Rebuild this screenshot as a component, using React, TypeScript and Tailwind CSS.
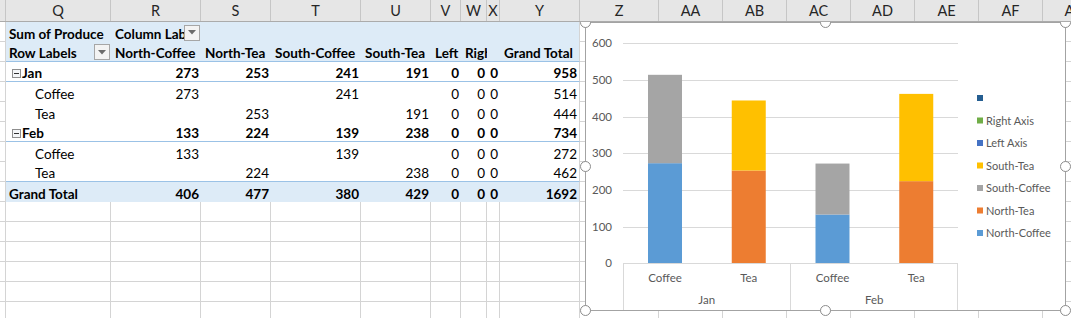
import React from 'react';

const COLS = [
  { w: 'w-[6px]', h: '' },
  { w: 'w-[105px]', h: 'Q' },
  { w: 'w-[90px]', h: 'R' },
  { w: 'w-[70px]', h: 'S' },
  { w: 'w-[90px]', h: 'T' },
  { w: 'w-[70px]', h: 'U' },
  { w: 'w-[30px]', h: 'V' },
  { w: 'w-[26px]', h: 'W' },
  { w: 'w-[13px]', h: 'X' },
  { w: 'w-[80px]', h: 'Y' },
  { w: 'w-[79px]', h: 'Z' },
  { w: 'w-[64px]', h: 'AA' },
  { w: 'w-[64px]', h: 'AB' },
  { w: 'w-[64px]', h: 'AC' },
  { w: 'w-[64px]', h: 'AD' },
  { w: 'w-[64px]', h: 'AE' },
  { w: 'w-[64px]', h: 'AF' },
  { w: 'w-[64px]', h: 'AG' },
];

type PRow = {
  kind: 'h1' | 'h2' | 'data';
  label?: string;
  vals?: string[];
  bold?: boolean;
  group?: boolean;
  indent?: boolean;
  band?: boolean;
  line?: boolean;
};

const PIVOT: PRow[] = [
  { kind: 'h1', band: true },
  { kind: 'h2', band: true, line: true, bold: true },
  { kind: 'data', label: 'Jan', bold: true, group: true, line: true, vals: ['273', '253', '241', '191', '0', '0', '0', '958'] },
  { kind: 'data', label: 'Coffee', indent: true, vals: ['273', '', '241', '', '0', '0', '0', '514'] },
  { kind: 'data', label: 'Tea', indent: true, vals: ['', '253', '', '191', '0', '0', '0', '444'] },
  { kind: 'data', label: 'Feb', bold: true, group: true, line: true, vals: ['133', '224', '139', '238', '0', '0', '0', '734'] },
  { kind: 'data', label: 'Coffee', indent: true, vals: ['133', '', '139', '', '0', '0', '0', '272'] },
  { kind: 'data', label: 'Tea', indent: true, line: true, vals: ['', '224', '', '238', '0', '0', '0', '462'] },
  { kind: 'data', label: 'Grand Total', bold: true, band: true, vals: ['406', '477', '380', '429', '0', '0', '0', '1692'] },
];

const H2 = ['North-Coffee', 'North-Tea', 'South-Coffee', 'South-Tea', 'Left Axis', 'Right Axis', '', 'Grand Total'];

function DropBtn() {
  return (
    <div className="shrink-0 w-[16px] h-[16px] mr-[1px] -mt-[3px] border border-[#a6a6a6] bg-[#f3f3f3] flex items-center justify-center">
      <svg width="8" height="5" viewBox="0 0 8 5">
        <path d="M0 0 L8 0 L4 4.5 Z" fill="#6b6b6b" />
      </svg>
    </div>
  );
}

function Collapse() {
  return (
    <div className="shrink-0 w-[9px] h-[9px] border border-[#8e8e8e] bg-[#f4f6f8] flex items-center justify-center mr-[1px]">
      <div className="w-[5px] h-[1px] bg-[#333]" />
    </div>
  );
}

function PivotRow({ r }: { r: PRow }) {
  const bg = r.band ? 'bg-[#ddebf7]' : 'bg-white';
  const bb = r.line ? 'border-b border-[#9bc2e6]' : '';
  const weight = r.bold ? 'font-bold' : 'font-normal';
  const pcols = COLS.slice(1, 10);
  return (
    <>
      {pcols.map((c, i) => {
        const isLast = i === 8;
        const base = `${c.w} shrink-0 h-[20px] pt-[4px] ${bg} ${bb} ${isLast ? 'border-r border-r-[#d4d4d4]' : ''} overflow-hidden whitespace-nowrap flex items-center`;
        if (r.kind === 'h1') {
          if (i === 0)
            return (
              <div key={i} className={`${base} pl-[3px] font-bold`}>
                Sum of Produce
              </div>
            );
          if (i === 1)
            return (
              <div key={i} className={`${base} pl-[4px] font-bold`}>
                <span className="flex-1 overflow-hidden">Column Labels</span>
                <DropBtn />
              </div>
            );
          return <div key={i} className={base} />;
        }
        if (r.kind === 'h2') {
          if (i === 0)
            return (
              <div key={i} className={`${base} pl-[3px] font-bold`}>
                <span className="flex-1 overflow-hidden">Row Labels</span>
                <DropBtn />
              </div>
            );
          return (
            <div key={i} className={`${base} pl-[4px] font-bold`}>
              {H2[i - 1]}
            </div>
          );
        }
        if (i === 0) {
          return (
            <div
              key={i}
              className={`${base} ${weight} ${r.group ? 'pl-[6px]' : r.indent ? 'pl-[29px]' : 'pl-[3px]'}`}
            >
              {r.group && <Collapse />}
              {r.label}
            </div>
          );
        }
        return (
          <div key={i} className={`${base} ${weight} justify-end pr-[2px]`}>
            {r.vals![i - 1]}
          </div>
        );
      })}
    </>
  );
}

function GridCell({ w }: { w: string }) {
  return <div className={`${w} shrink-0 h-[20px] border-r border-b border-[#d4d4d4] bg-white`} />;
}

const Y0 = 241.3;
const STEP = 36.67;
const PX = STEP / 100;

const BARS: { cx: number; segs: [number, string][] }[] = [
  { cx: 80, segs: [[273, '#5b9bd5'], [241, '#a5a5a5']] },
  { cx: 163.75, segs: [[253, '#ed7d31'], [191, '#ffc000']] },
  { cx: 247.5, segs: [[133, '#5b9bd5'], [139, '#a5a5a5']] },
  { cx: 331.25, segs: [[224, '#ed7d31'], [238, '#ffc000']] },
];

const LEGEND: [string, string][] = [
  ['', '#255e91'],
  ['Right Axis', '#70ad47'],
  ['Left Axis', '#4472c4'],
  ['South-Tea', '#ffc000'],
  ['South-Coffee', '#a5a5a5'],
  ['North-Tea', '#ed7d31'],
  ['North-Coffee', '#5b9bd5'],
];

function Chart() {
  const font = 'Lato, sans-serif';
  const fs = '11.5';
  return (
    <svg width="481" height="289" viewBox="0 0 481 289" className="block">
      <rect x="0.5" y="0.5" width="480" height="288" fill="#ffffff" stroke="#a3a3a3" strokeWidth="1" />
      {[1, 2, 3, 4, 5, 6].map((k) => {
        const y = Math.round(Y0 - k * STEP) + 0.5;
        return <line key={k} x1="38" x2="373" y1={y} y2={y} stroke="#d9d9d9" strokeWidth="1" />;
      })}
      {[0, 1, 2, 3, 4, 5, 6].map((k) => {
        const y = Y0 - k * STEP;
        return (
          <text key={k} x="27" y={y + 4} textAnchor="end" fontSize={fs} fill="#595959" fontFamily={font}>
            {k * 100}
          </text>
        );
      })}
      {BARS.map((b, i) => {
        let base = Y0;
        return (
          <g key={i}>
            {b.segs.map(([v, c], j) => {
              const h = v * PX;
              base -= h;
              return <rect key={j} x={b.cx - 17} y={base} width="34" height={h} fill={c} />;
            })}
          </g>
        );
      })}
      <line x1="38" x2="373" y1="241.5" y2="241.5" stroke="#d9d9d9" />
      <line x1="38.5" x2="38.5" y1="241" y2="288" stroke="#d9d9d9" />
      <line x1="205.5" x2="205.5" y1="241" y2="288" stroke="#d9d9d9" />
      <line x1="372.5" x2="372.5" y1="241" y2="288" stroke="#d9d9d9" />
      {[
        ['Coffee', 80],
        ['Tea', 163.75],
        ['Coffee', 247.5],
        ['Tea', 331.25],
      ].map(([t, x], i) => (
        <text key={i} x={x as number} y="260" textAnchor="middle" fontSize={fs} fill="#595959" fontFamily={font}>
          {t}
        </text>
      ))}
      <text x="121.75" y="282" textAnchor="middle" fontSize={fs} fill="#595959" fontFamily={font}>
        Jan
      </text>
      <text x="289.25" y="282" textAnchor="middle" fontSize={fs} fill="#595959" fontFamily={font}>
        Feb
      </text>
      {LEGEND.map(([t, c], i) => {
        const cy = 76 + i * 22.5;
        return (
          <g key={i}>
            <rect x="392" y={cy - 3} width="6" height="6" fill={c} />
            <text x="401" y={cy + 4} fontSize="11" fill="#595959" fontFamily={font}>
              {t}
            </text>
          </g>
        );
      })}
    </svg>
  );
}

const HANDLES = [
  'left-[579.5px] top-[16.5px]',
  'left-[819.5px] top-[16.5px]',
  'left-[1059.5px] top-[16.5px]',
  'left-[579.5px] top-[161px]',
  'left-[1059.5px] top-[161px]',
  'left-[579.5px] top-[304.5px]',
  'left-[819.5px] top-[304.5px]',
  'left-[1059.5px] top-[304.5px]',
];

export default function App() {
  const rows = Array.from({ length: 15 }, (_, i) => i);
  return (
    <div className="relative w-[1071px] h-[318px] overflow-hidden bg-white text-black text-[13.5px] font-[family-name:Lato,sans-serif]">
      <div className="relative z-20 flex h-[22px] bg-[#e6e6e6] border-b border-[#ababab] text-[#262626] text-[14.5px]">
        {COLS.map((c, i) => (
          <div
            key={i}
            className={`${c.w} shrink-0 h-full border-r border-[#c6c6c6] flex items-center justify-center overflow-hidden whitespace-nowrap`}
          >
            {c.h}
          </div>
        ))}
      </div>
      <div className="flex flex-col">
        {rows.map((ri) => (
          <div key={ri} className="flex h-[20px]">
            <GridCell w={COLS[0].w} />
            {ri < PIVOT.length ? (
              <PivotRow r={PIVOT[ri]} />
            ) : (
              COLS.slice(1, 10).map((c, i) => <GridCell key={i} w={c.w} />)
            )}
            {COLS.slice(10).map((c, i) => (
              <GridCell key={i} w={c.w} />
            ))}
          </div>
        ))}
      </div>
      <div className="absolute z-10 left-[585px] top-[22px]">
        <Chart />
      </div>
      {HANDLES.map((h, i) => (
        <div
          key={i}
          className={`absolute z-10 ${h} w-[11px] h-[11px] rounded-full border-[1.5px] border-[#8c8c8c] bg-white`}
        />
      ))}
    </div>
  );
}
